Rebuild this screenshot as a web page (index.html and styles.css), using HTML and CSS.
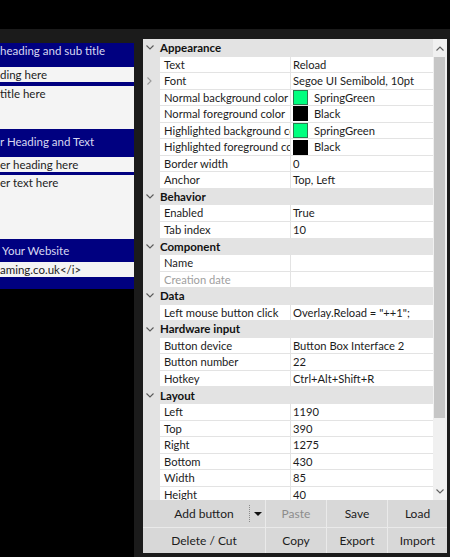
FILE: index.html
```html
<!DOCTYPE html>
<html lang="en">
<head>
    <meta charset="UTF-8">
    <title>Overlay editor</title>
    <link rel="stylesheet" href="styles.css">
</head>
<body>
    <div class="top-bar"></div>
    <div class="main">
        <div class="preview">
            <div class="form">
                <div class="form-title t1">heading and sub title</div>
                <div class="form-input">ding here</div>
                <div class="form-area a1">title here</div>
                <div class="form-title t2">r Heading and Text</div>
                <div class="form-input">er heading here</div>
                <div class="form-area a2">er text here</div>
                <div class="form-title t3">Your Website</div>
                <div class="form-input">aming.co.uk&lt;/i&gt;</div>
            </div>
        </div>

        <div class="inspector">
            <div class="grid">
                <div class="rows">
                    <div class="cat"><span class="gut"><svg width="8" height="5" viewBox="0 0 8 5"><polyline points="0.5,0.5 4,4 7.5,0.5" fill="none" stroke="#5a5a5a" stroke-width="1.1"/></svg></span>Appearance</div>
                    <div class="prop"><span class="gut"></span><span class="name">Text</span><span class="val">Reload</span></div>
                    <div class="prop"><span class="gut"><svg width="5" height="8" viewBox="0 0 5 8"><polyline points="0.5,0.5 4,4 0.5,7.5" fill="none" stroke="#9a9a9a" stroke-width="1.1"/></svg></span><span class="name">Font</span><span class="val">Segoe UI Semibold, 10pt</span></div>
                    <div class="prop"><span class="gut"></span><span class="name">Normal background color</span><span class="val"><i class="swatch green"></i>SpringGreen</span></div>
                    <div class="prop"><span class="gut"></span><span class="name">Normal foreground color</span><span class="val"><i class="swatch black"></i>Black</span></div>
                    <div class="prop"><span class="gut"></span><span class="name">Highlighted background color</span><span class="val"><i class="swatch green"></i>SpringGreen</span></div>
                    <div class="prop"><span class="gut"></span><span class="name">Highlighted foreground color</span><span class="val"><i class="swatch black"></i>Black</span></div>
                    <div class="prop"><span class="gut"></span><span class="name">Border width</span><span class="val">0</span></div>
                    <div class="prop"><span class="gut"></span><span class="name">Anchor</span><span class="val">Top, Left</span></div>

                    <div class="cat"><span class="gut"><svg width="8" height="5" viewBox="0 0 8 5"><polyline points="0.5,0.5 4,4 7.5,0.5" fill="none" stroke="#5a5a5a" stroke-width="1.1"/></svg></span>Behavior</div>
                    <div class="prop"><span class="gut"></span><span class="name">Enabled</span><span class="val">True</span></div>
                    <div class="prop"><span class="gut"></span><span class="name">Tab index</span><span class="val">10</span></div>

                    <div class="cat"><span class="gut"><svg width="8" height="5" viewBox="0 0 8 5"><polyline points="0.5,0.5 4,4 7.5,0.5" fill="none" stroke="#5a5a5a" stroke-width="1.1"/></svg></span>Component</div>
                    <div class="prop"><span class="gut"></span><span class="name">Name</span><span class="val"></span></div>
                    <div class="prop"><span class="gut"></span><span class="name muted">Creation date</span><span class="val"></span></div>

                    <div class="cat"><span class="gut"><svg width="8" height="5" viewBox="0 0 8 5"><polyline points="0.5,0.5 4,4 7.5,0.5" fill="none" stroke="#5a5a5a" stroke-width="1.1"/></svg></span>Data</div>
                    <div class="prop"><span class="gut"></span><span class="name">Left mouse button click</span><span class="val">Overlay.Reload = "++1";</span></div>

                    <div class="cat"><span class="gut"><svg width="8" height="5" viewBox="0 0 8 5"><polyline points="0.5,0.5 4,4 7.5,0.5" fill="none" stroke="#5a5a5a" stroke-width="1.1"/></svg></span>Hardware input</div>
                    <div class="prop"><span class="gut"></span><span class="name">Button device</span><span class="val">Button Box Interface 2</span></div>
                    <div class="prop"><span class="gut"></span><span class="name">Button number</span><span class="val">22</span></div>
                    <div class="prop"><span class="gut"></span><span class="name">Hotkey</span><span class="val">Ctrl+Alt+Shift+R</span></div>

                    <div class="cat"><span class="gut"><svg width="8" height="5" viewBox="0 0 8 5"><polyline points="0.5,0.5 4,4 7.5,0.5" fill="none" stroke="#5a5a5a" stroke-width="1.1"/></svg></span>Layout</div>
                    <div class="prop"><span class="gut"></span><span class="name">Left</span><span class="val">1190</span></div>
                    <div class="prop"><span class="gut"></span><span class="name">Top</span><span class="val">390</span></div>
                    <div class="prop"><span class="gut"></span><span class="name">Right</span><span class="val">1275</span></div>
                    <div class="prop"><span class="gut"></span><span class="name">Bottom</span><span class="val">430</span></div>
                    <div class="prop"><span class="gut"></span><span class="name">Width</span><span class="val">85</span></div>
                    <div class="prop"><span class="gut"></span><span class="name">Height</span><span class="val">40</span></div>
                </div>
                <div class="scrollbar">
                    <div class="arrow up"><svg width="8" height="5" viewBox="0 0 8 5"><polyline points="0.5,4.5 4,1 7.5,4.5" fill="none" stroke="#606060" stroke-width="1.1"/></svg></div>
                    <div class="thumb"></div>
                    <div class="track"></div>
                    <div class="arrow down"><svg width="8" height="5" viewBox="0 0 8 5"><polyline points="0.5,0.5 4,4 7.5,0.5" fill="none" stroke="#606060" stroke-width="1.1"/></svg></div>
                </div>
            </div>

            <div class="buttons">
                <div class="btn split">Add button<span class="drop"><svg width="8" height="4" viewBox="0 0 8 4"><polygon points="0,0 8,0 4,4" fill="#111"/></svg></span></div>
                <div class="btn disabled">Paste</div>
                <div class="btn">Save</div>
                <div class="btn">Load</div>
                <div class="btn">Delete / Cut</div>
                <div class="btn">Copy</div>
                <div class="btn">Export</div>
                <div class="btn">Import</div>
            </div>
        </div>
    </div>
</body>
</html>
```

FILE: styles.css
```css
body {
    margin: 0;
    width: 450px;
    height: 557px;
    overflow: hidden;
    background-color: #1b1b1b;
    font-family: Lato, "Liberation Sans", sans-serif;
    color: #1c1c1c;
}
.top-bar {
    height: 29px;
    background-color: #000;
}
.main {
    display: flex;
    gap: 9px;
    padding-top: 10px;
}

/* left preview of the overlay */
.preview {
    width: 134px;
    height: 514px;
    margin-top: 4px;
    background-color: #000;
    overflow: hidden;
}
.form {
    background-color: #000080;
    padding-bottom: 12px;
    font-size: 11.5px;
}
.form-title {
    color: #d8d8f2;
    line-height: 16px;
    white-space: nowrap;
}
.form-title.t1 { height: 24px; }
.form-title.t2 { height: 23px; padding-top: 5px; }
.form-title.t3 { height: 19px; padding-top: 4px; padding-left: 2px; }
.form-input, .form-area {
    background-color: #f4f4f4;
    line-height: 16px;
    white-space: nowrap;
}
.form-input { height: 15px; line-height: 15px; }
.form-area.a1 { height: 43px; margin-top: 4px; }
.form-area.a2 { height: 64px; margin-top: 3px; }

/* property inspector */
.inspector {
    width: 304px;
    height: 514px;
    background-color: #e3e3e3;
    display: flex;
    flex-direction: column;
}
.grid {
    height: 461px;
    display: flex;
    overflow: hidden;
}
.rows {
    flex: 1;
    display: grid;
    grid-auto-rows: 15.55px;
    row-gap: 1px;
    align-content: start;
    padding-top: 1px;
    font-size: 11.2px;
}
.cat, .prop {
    display: flex;
    align-items: center;
    line-height: 15.5px;
    white-space: nowrap;
}
.cat {
    font-weight: bold;
    font-size: 11.5px;
    color: #111;
}
.gut {
    width: 17px;
    height: 100%;
    flex: none;
    display: flex;
    align-items: center;
    padding-left: 4px;
    box-sizing: border-box;
}
.cat .gut { padding-left: 3px; }
.name, .val {
    background-color: #fff;
    height: 100%;
    overflow: hidden;
    box-sizing: border-box;
    display: flex;
    align-items: center;
}
.name {
    width: 130px;
    padding-left: 4px;
    margin-right: 1px;
    flex: none;
}
.val {
    flex: 1;
    padding-left: 2px;
}
.muted { color: #a0a0a0; }
.swatch {
    width: 13px;
    height: 13px;
    border: 1px solid #444;
    margin-right: 6px;
    flex: none;
}
.swatch.green { background-color: #00ff7f; border-color: #2a7a50; }
.swatch.black { background-color: #000; border-color: #000; }

.scrollbar {
    width: 14px;
    background-color: #f0f0f0;
    display: flex;
    flex-direction: column;
}
.arrow {
    display: flex;
    justify-content: center;
    align-items: center;
    height: 18px;
}
.arrow.down { height: 17px; }
.thumb {
    height: 361px;
    margin: 0 2px 0 1px;
    background-color: #c6c6c6;
}
.track { flex: 1; }

.buttons {
    display: grid;
    grid-template-columns: 122px 60px 60px 59px;
    grid-template-rows: 27px 25px;
    gap: 1px;
    background-color: #eaeaea;
    font-size: 12px;
}
.btn {
    background-color: #d8d8d8;
    display: flex;
    justify-content: center;
    align-items: center;
    color: #1c1c1c;
}
.btn.disabled { color: #8c8c8c; }
.btn.split { position: relative; }
.drop {
    position: absolute;
    right: 0;
    top: 5px;
    bottom: 5px;
    width: 15px;
    border-left: 1px dotted #8a8a8a;
    display: flex;
    align-items: center;
    justify-content: center;
}
```
